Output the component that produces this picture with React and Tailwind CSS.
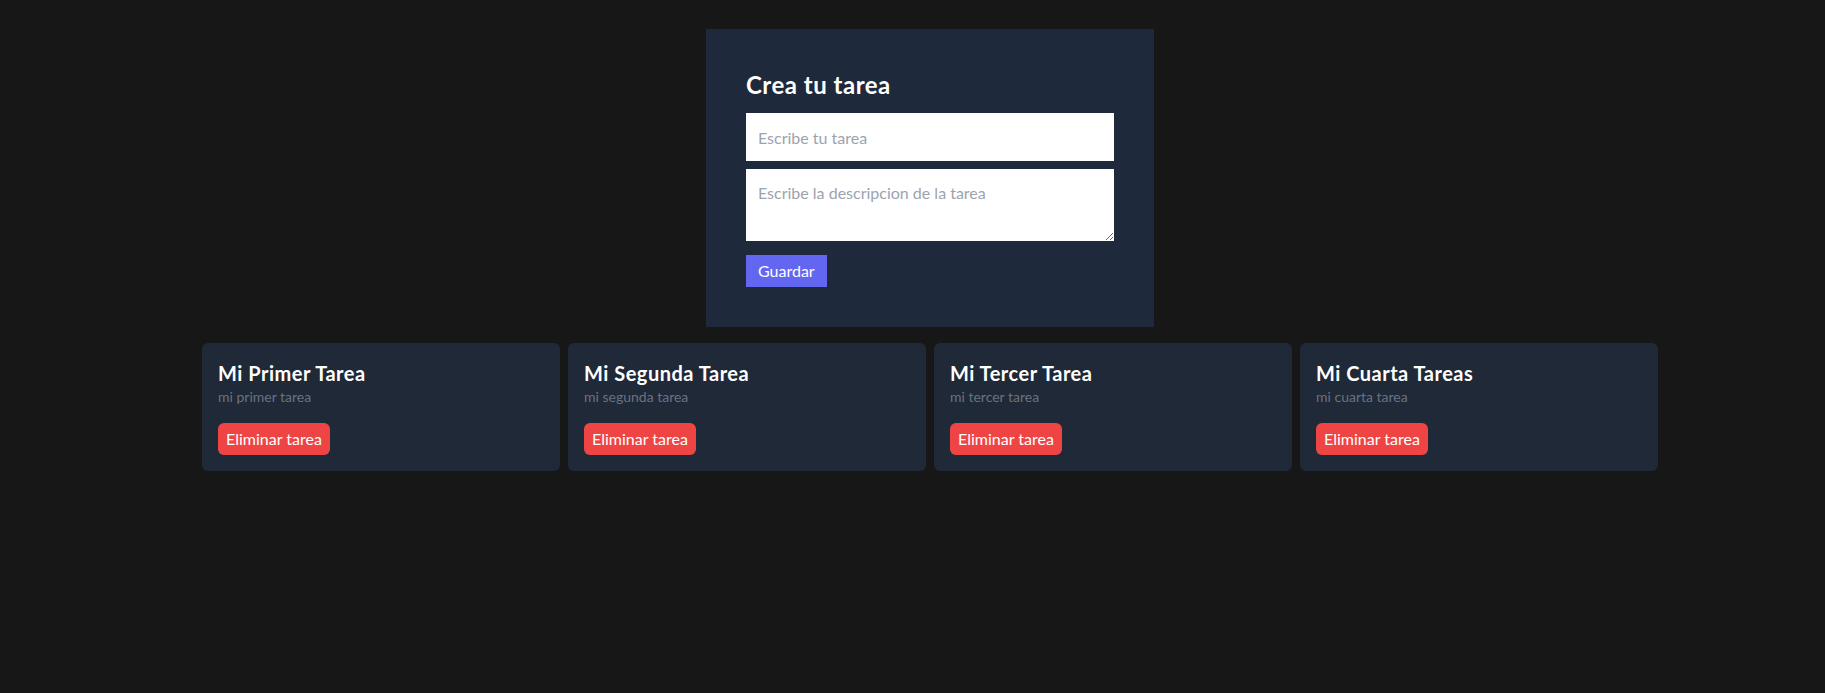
import React from "react";

const tasks = [
  { title: "Mi Primer Tarea", description: "mi primer tarea" },
  { title: "Mi Segunda Tarea", description: "mi segunda tarea" },
  { title: "Mi Tercer Tarea", description: "mi tercer tarea" },
  { title: "Mi Cuarta Tareas", description: "mi cuarta tarea" },
];

export default function App() {
  return (
    <main
      className="min-h-[693px] bg-[#171717] pl-[35px] pt-[29px]"
      style={{ fontFamily: 'Lato, "Noto Sans", sans-serif' }}
    >
      <div className="mx-auto flex w-[1456px] flex-col items-center">
        <form className="flex w-[448px] flex-col items-start bg-[#1e293b] p-10">
          <h1 className="mb-3 text-2xl font-bold leading-8 tracking-[0.5px] text-white">Crea tu tarea</h1>
          <input
            placeholder="Escribe tu tarea"
            className="mb-2 h-12 w-full bg-white px-3 text-base text-black placeholder:text-[#9ca3af] outline-none"
          />
          <textarea
            rows={2}
            placeholder="Escribe la descripcion de la tarea"
            className="mb-[14px] h-[72px] w-full bg-white p-3 text-base leading-6 text-black placeholder:text-[#9ca3af] outline-none"
          />
          <button type="button" className="h-8 bg-[#6366f1] px-3 text-base text-white">
            Guardar
          </button>
        </form>
        <div className="mt-4 grid w-full grid-cols-4 gap-2">
          {tasks.map((t) => (
            <div key={t.title} className="rounded-md bg-[#1f2937] p-4">
              <h2 className="text-xl font-bold leading-7 tracking-[0.5px] text-white">{t.title}</h2>
              <p className="text-sm leading-5 text-[#6b7280]">{t.description}</p>
              <button type="button" className="mt-4 h-8 rounded-md bg-[#ef4444] px-2 text-base text-white">
                Eliminar tarea
              </button>
            </div>
          ))}
        </div>
      </div>
    </main>
  );
}
